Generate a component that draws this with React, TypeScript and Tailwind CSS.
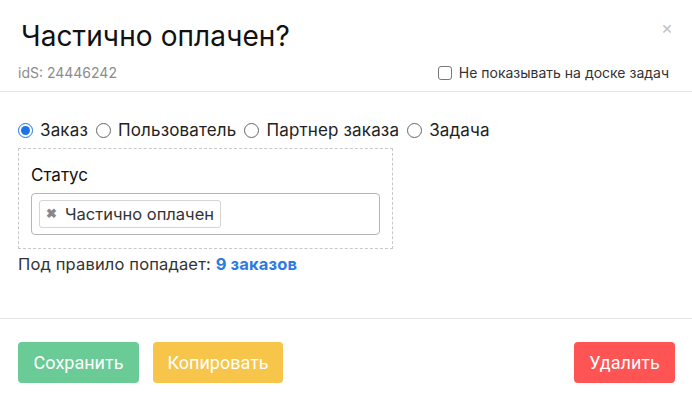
export default function App() {
  const font = { fontFamily: "Inter, 'Noto Sans', sans-serif" };
  return (
    <div className="w-[692px] h-[400px] bg-white flex flex-col relative overflow-hidden" style={font}>
      <button className="absolute top-[19px] right-[19px] text-[#c4c4c4] text-[18px] leading-none">×</button>
      {/* Header */}
      <div className="px-[21px] pt-[19px] pb-[8px] border-b border-[#e5e5e5]">
        <h1 className="text-[28px] leading-[34px] text-[#111] tracking-[0.1px]">Частично оплачен?</h1>
        <div className="flex items-center justify-between mt-[9px] pr-[2px]">
          <span className="text-[14px] text-[#8c8c8c] -ml-[3px]">idS: 24446242</span>
          <label className="flex items-center gap-[7px] text-[14px] text-[#333]">
            <span className="w-[14px] h-[14px] border border-[#777] rounded-[3px] bg-white" />
            Не показывать на доске задач
          </label>
        </div>
      </div>
      {/* Body */}
      <div className="px-[18px] pt-[26px] flex-1 border-b border-[#e5e5e5]">
        <div className="flex items-center text-[17px] text-[#222] gap-[8px] leading-[24px] tracking-[0.15px]">
          {["Заказ", "Пользователь", "Партнер заказа", "Задача"].map((l, i) => (
            <label key={l} className="flex items-center gap-[7px]">
              {i === 0 ? (
                <span className="w-[15px] h-[15px] rounded-full border-[1.5px] border-[#1a73e8] flex items-center justify-center">
                  <span className="w-[9px] h-[9px] rounded-full bg-[#1a73e8]" />
                </span>
              ) : (
                <span className="w-[15px] h-[15px] rounded-full border border-[#666]" />
              )}
              {l}
            </label>
          ))}
        </div>
        <div className="mt-[6px] w-[375px] border border-dashed border-[#c8c8c8] px-[12px] pt-[14px] pb-[13px]">
          <div className="text-[17px] text-[#111] leading-[24px]">Статус</div>
          <div className="mt-[6px] h-[42px] border border-[#b5b5b5] rounded-[4px] flex items-center px-[7px]">
            <span className="flex items-center gap-[8px] h-[28px] border border-[#d5d5d5] rounded-[3px] px-[6px] text-[16.5px] text-[#333]">
              <span className="text-[#888] text-[13px] font-bold">✖</span>
              Частично оплачен
            </span>
          </div>
        </div>
        <div className="mt-[3px] text-[16.5px] text-[#333] tracking-[0.15px]">
          Под правило попадает: <span className="text-[#2d7be0] font-bold">9 заказов</span>
        </div>
      </div>
      {/* Footer */}
      <div className="h-[81px] px-[18px] pt-[6px] flex items-center justify-between" style={{ fontFamily: "Roboto, sans-serif" }}>
        <div className="flex gap-[14px]">
          <button className="h-[41px] w-[121px] rounded-[4px] bg-[#6bcb96] text-white text-[18px]">Сохранить</button>
          <button className="h-[41px] w-[130px] rounded-[4px] bg-[#f7c54a] text-white text-[18px]">Копировать</button>
        </div>
        <button className="h-[41px] w-[101px] mr-[-1px] rounded-[4px] bg-[#ff5454] text-white text-[18px]">Удалить</button>
      </div>
    </div>
  );
}
